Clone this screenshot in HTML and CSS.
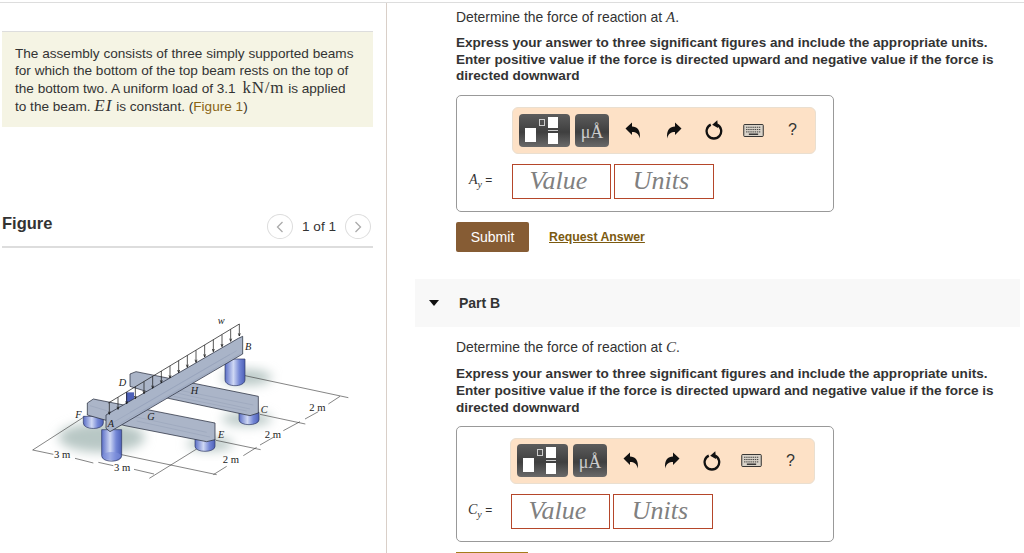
FILE: index.html
```html
<!DOCTYPE html>
<html lang="en">
<head>
    <meta charset="UTF-8">
    <meta name="viewport" content="width=device-width, initial-scale=1.0">
    <title>Reaction forces</title>
    <link rel="stylesheet" href="styles.css">
</head>
<body>
    <svg class="defs" width="0" height="0">
        <symbol id="i-undo" viewBox="0 0 16 17">
            <path d="M.5 6.500 7 .5v4c5 0 8.800 3.500 7.800 12-1-4.800-3.800-6.500-7.800-6.500v3z"/>
        </symbol>
        <symbol id="i-redo" viewBox="0 0 16 17">
            <path d="M15.500 6.500 9 .5v4c-5 0-8.800 3.500-7.800 12 1-4.800 3.800-6.500 7.800-6.500v3z"/>
        </symbol>
        <symbol id="i-reset" viewBox="0 0 18 20">
            <path d="M5.800 4.600A7.300 7.300 0 1 0 12 4.600" fill="none" stroke="#111" stroke-width="2.300"/>
            <path d="M12.300 .3 7.200 4.800l5.800 3.200z"/>
        </symbol>
        <symbol id="i-keys" viewBox="0 0 22 14">
            <rect x=".5" y=".5" width="21" height="13" rx="1" fill="#d8d2c8" stroke="#222"/>
            <path d="M3 3.500h16M3 6h16M3 8.500h16" stroke="#333" stroke-dasharray="1.500 .8"/>
            <path d="M6 11h10" stroke="#222" stroke-width="1.400"/>
        </symbol>
        <linearGradient id="g-cyl" x1="0" x2="1" y1="0" y2="0">
            <stop offset="0" stop-color="#5a6ec6"/>
            <stop offset=".42" stop-color="#cfd8f4"/>
            <stop offset=".72" stop-color="#7487d6"/>
            <stop offset="1" stop-color="#4e61b8"/>
        </linearGradient>
        <filter id="f-blur"><feGaussianBlur stdDeviation="16"/></filter>
        <filter id="f-soft"><feGaussianBlur stdDeviation=".7"/></filter>
    </svg>

    <div class="page">
        <div class="left">
            <div class="intro">
                The assembly consists of three simply supported beams<br>
                for which the bottom of the top beam rests on the top of<br>
                the bottom two. A uniform load of 3.1 <span class="unit">kN/m</span> is applied<br>
                to the beam. <span class="math">EI</span> is constant. (<a class="fig-link">Figure 1</a>)
            </div>

            <div class="figure-head">
                <h2>Figure</h2>
                <div class="pager">
                    <span class="pager-btn">
                        <svg width="8" height="12" viewBox="0 0 8 12"><path d="M6.500 1 1.500 6l5 5" fill="none" stroke="#aaa" stroke-width="1.300"/></svg>
                    </span>
                    <span class="pager-text">1 of 1</span>
                    <span class="pager-btn">
                        <svg width="8" height="12" viewBox="0 0 8 12"><path d="M1.500 1l5 5-5 5" fill="none" stroke="#aaa" stroke-width="1.300"/></svg>
                    </span>
                </div>
            </div>

            <svg class="diagram" width="320" height="190" viewBox="0 0 960 570">
                <g fill="#b8c7c5" filter="url(#f-blur)">
                    <ellipse cx="215" cy="385" rx="130" ry="45"/>
                    <ellipse cx="540" cy="405" rx="70" ry="20"/>
                    <ellipse cx="650" cy="330" rx="75" ry="20"/>
                    <ellipse cx="650" cy="205" rx="75" ry="24"/>
                </g>

                <g fill="none" stroke="#333" stroke-width="1.800">
                    <path d="M8 423 165 322M8 423 70 436M135 448 190 462M205 460 250 470M312 481 372 495"/>
                    <path d="M270 436 560 497M358 508 500 420M550 497 590 472M640 440 680 415M690 408 730 385M760 365 810 338M825 330 865 308M895 285 930 262"/>
                    <path d="M558 394 692 422M690 316 826 345M645 200 955 266"/>
                </g>

                <g filter="url(#f-soft)">
                    <path d="M585 150v62c0 24 60 24 60 0v-62z" fill="url(#g-cyl)" stroke="#2c3560" stroke-width="2"/>

                    <path d="M627 310v22c0 20 60 20 60 0v-22z" fill="url(#g-cyl)" stroke="#2c3560" stroke-width="2"/>
                    <path d="M300 195 318 188 685 262V312L660 320 415 268 300 232z" fill="#abb5c8" stroke="#262c3c" stroke-width="2.200"/>
                    <path d="M420 238 670 288M440 252 660 300M430 262 650 306" stroke="#8a96ae" fill="none"/>
                    <path d="M288 250h24v45h-24z" fill="#4e61b8"/>

                    <path d="M160 322v20c0 22 60 22 60 0v-20z" fill="url(#g-cyl)" stroke="#2c3560" stroke-width="2"/>
                    <path d="M495 390v22c0 20 60 20 60 0v-22z" fill="url(#g-cyl)" stroke="#2c3560" stroke-width="2"/>
                    <path d="M172 282 190 270 555 342V392L530 398 285 350 172 318z" fill="#abb5c8" stroke="#262c3c" stroke-width="2.200"/>
                    <path d="M300 320 530 370M320 336 540 384M180 290 230 305" stroke="#8a96ae" fill="none"/>

                    <path d="M215 362v78c0 22 60 22 60 0v-78z" fill="url(#g-cyl)" stroke="#2c3560" stroke-width="2"/>
                    <ellipse cx="245" cy="441" rx="28" ry="12" fill="#7d90dc" opacity=".6"/>

                    <path d="M228 318 625 88 638 82V135L240 368 228 358z" fill="#a9b4c8" stroke="#262c3c" stroke-width="2.200"/>
                    <path d="M250 340 620 125M270 344 630 134M300 310 600 136M330 312 560 178" stroke="#8d99b2" fill="none"/>
                </g>

                <g fill="none" stroke="#1a1a1a" stroke-width="2.200">
                    <path d="M235 282 628 45"/>
                    <path d="M238 280v36M264 265v36M290 249v36M316 233v36M342 218v36M368 202v36M394 186v36M420 171v36M446 155v36M472 139v36M498 124v36M524 108v36M550 92v36M576 77v36M602 61v36M628 45v36"/>
                    <path d="M235 308l3 8 3-8M261 293l3 8 3-8M287 277l3 8 3-8M313 261l3 8 3-8M339 246l3 8 3-8M365 230l3 8 3-8M391 214l3 8 3-8M417 199l3 8 3-8M443 183l3 8 3-8M469 167l3 8 3-8M495 152l3 8 3-8M521 136l3 8 3-8M547 120l3 8 3-8M573 105l3 8 3-8M599 89l3 8 3-8M625 73l3 8 3-8"/>
                </g>

                <g class="fig-labels">
                    <text x="563" y="44">w</text>
                    <text x="645" y="122">B</text>
                    <text x="266" y="232">D</text>
                    <text x="482" y="256">H</text>
                    <text x="136" y="327">F</text>
                    <text x="233" y="354">A</text>
                    <text x="352" y="332">G</text>
                    <text x="692" y="312">C</text>
                    <text x="564" y="388">E</text>
                </g>
                <g class="fig-dims">
                    <text x="72" y="448">3 m</text>
                    <text x="252" y="485">3 m</text>
                    <text x="578" y="463">2 m</text>
                    <text x="704" y="387">2 m</text>
                    <text x="838" y="305">2 m</text>
                </g>
            </svg>
        </div>

        <div class="right">
            <section class="part part-a">
                <p class="lead">Determine the force of reaction at <span class="math">A</span>.</p>
                <p class="instr">Express your answer to three significant figures and include the appropriate units.<br>
                    Enter positive value if the force is directed upward and negative value if the force is<br>
                    directed downward</p>

                <div class="answer">
                    <div class="toolbar">
                        <span class="tool-btn tool-wide">
                            <span class="sq sq-big"></span>
                            <span class="sq sq-small"></span>
                            <span class="frac"><i></i><b></b><i></i></span>
                        </span>
                        <span class="tool-btn tool-unit">μÅ</span>
                        <svg class="tool-ico ico-undo"><use href="#i-undo"/></svg>
                        <svg class="tool-ico ico-redo"><use href="#i-redo"/></svg>
                        <svg class="tool-ico ico-reset"><use href="#i-reset"/></svg>
                        <svg class="tool-ico ico-keys"><use href="#i-keys"/></svg>
                        <span class="tool-help">?</span>
                    </div>
                    <div class="entry">
                        <span class="var"><span class="math">A<sub>y</sub></span> =</span>
                        <span class="field">Value</span>
                        <span class="field">Units</span>
                    </div>
                </div>

                <div class="actions">
                    <span class="submit">Submit</span>
                    <a class="request">Request Answer</a>
                </div>
            </section>

            <div class="part-head">
                <span class="caret"></span>
                <span class="part-title">Part B</span>
            </div>

            <section class="part part-b">
                <p class="lead">Determine the force of reaction at <span class="math">C</span>.</p>
                <p class="instr">Express your answer to three significant figures and include the appropriate units.<br>
                    Enter positive value if the force is directed upward and negative value if the force is<br>
                    directed downward</p>

                <div class="answer">
                    <div class="toolbar">
                        <span class="tool-btn tool-wide">
                            <span class="sq sq-big"></span>
                            <span class="sq sq-small"></span>
                            <span class="frac"><i></i><b></b><i></i></span>
                        </span>
                        <span class="tool-btn tool-unit">μÅ</span>
                        <svg class="tool-ico ico-undo"><use href="#i-undo"/></svg>
                        <svg class="tool-ico ico-redo"><use href="#i-redo"/></svg>
                        <svg class="tool-ico ico-reset"><use href="#i-reset"/></svg>
                        <svg class="tool-ico ico-keys"><use href="#i-keys"/></svg>
                        <span class="tool-help">?</span>
                    </div>
                    <div class="entry">
                        <span class="var"><span class="math">C<sub>y</sub></span> =</span>
                        <span class="field">Value</span>
                        <span class="field">Units</span>
                    </div>
                </div>

                <div class="next-submit"></div>
            </section>
        </div>
    </div>
</body>
</html>
```

FILE: styles.css
```css
* {
    box-sizing: border-box;
}
html, body {
    margin: 0;
    height: 553px;
    overflow: hidden;
    background: white;
}
body {
    font-family: "Liberation Sans", Arial, sans-serif;
    font-size: 14px;
    color: #333;
}
.defs {
    display: block;
    height: 0;
}
.page {
    display: flex;
    height: 551px;
    margin-top: 2px;
    border-top: 1px solid #ddd;
}
.math {
    font-family: "Liberation Serif", serif;
    font-style: italic;
    line-height: 1;
}
.math sub {
    font-size: 10px;
    line-height: 0;
}

/* left column */
.left {
    width: 387px;
    flex: none;
    padding: 28px 13px 0 2px;
    border-right: 1px solid #d9cfc8;
}
.intro {
    height: 96px;
    padding: 13px 0 0 13px;
    background: #f5f4e4;
    border-top: 1px solid #ddd;
    line-height: 17px;
    font-size: 13.600px;
    white-space: nowrap;
}
.unit {
    font-family: "Liberation Serif", serif;
    font-size: 17px;
    letter-spacing: .8px;
    line-height: 1;
    margin-left: 3px;
}
.intro .math {
    font-size: 17px;
    letter-spacing: 1px;
}
.fig-link {
    color: #8a6414;
}
.figure-head {
    display: flex;
    justify-content: space-between;
    align-items: center;
    height: 41px;
    margin-top: 80px;
    padding-right: 2px;
    border-bottom: 2px solid #ddd;
}
.figure-head h2 {
    margin: 0 0 7px;
    font-size: 16.500px;
    color: #333;
}
.pager {
    display: flex;
    align-items: center;
    gap: 9px;
    font-size: 13.600px;
}
.pager-btn {
    display: flex;
    align-items: center;
    justify-content: center;
    width: 26px;
    height: 25px;
    border: 1px solid #ddd;
    border-radius: 50%;
}
.diagram {
    display: block;
    margin: 61px 0 0 28px;
}
.fig-labels text {
    font-family: "Liberation Serif", serif;
    font-style: italic;
    font-size: 31px;
    fill: #222;
}
.fig-dims text {
    font-family: "Liberation Serif", serif;
    font-size: 32px;
    fill: #222;
}

/* right column */
.right {
    flex: 1;
    padding-left: 28px;
    min-width: 0;
}
.part {
    padding-left: 41px;
    padding-right: 26px;
}
.lead {
    margin: 0;
    padding-top: 6px;
    font-size: 13.900px;
    line-height: 17px;
}
.lead .math {
    font-size: 15px;
}
.instr {
    margin: 9px 0 0;
    font-size: 13.550px;
    font-weight: bold;
    line-height: 16.500px;
    white-space: nowrap;
}
.answer {
    width: 378px;
    height: 117px;
    margin-top: 10px;
    padding: 11px 17px 0 55px;
    border: 1px solid #999;
    border-radius: 5px;
}
.toolbar {
    display: flex;
    align-items: center;
    height: 47px;
    padding-left: 6px;
    background: #fde1c6;
    border: 1px solid #eadfd0;
    border-radius: 6px;
}
.tool-btn {
    display: block;
    position: relative;
    height: 33px;
    border-radius: 4px;
    background: linear-gradient(#5c5c5c, #3f3f3f 55%, #6a6a6a);
    color: #ccc;
}
.tool-wide {
    width: 51px;
}
.tool-unit {
    width: 34px;
    margin-left: 5px;
    font-family: "Liberation Serif", serif;
    font-size: 18px;
    line-height: 36px;
    text-align: center;
}
.sq {
    position: absolute;
    background: white;
}
.sq-big {
    left: 6px;
    top: 14px;
    width: 11px;
    height: 14px;
}
.sq-small {
    left: 20px;
    top: 5px;
    width: 6px;
    height: 7px;
    background: none;
    border: 1px solid #ccc;
}
.frac {
    position: absolute;
    left: 29px;
    top: 3px;
    width: 10px;
}
.frac i, .frac b {
    display: block;
    background: white;
}
.frac i {
    height: 11px;
}
.frac b {
    height: 1px;
    margin: 2px 0;
    background: #ccc;
}
.tool-ico {
    flex: none;
    fill: #111;
}
.ico-undo {
    width: 16px;
    height: 17px;
    margin-left: 16px;
}
.ico-redo {
    width: 16px;
    height: 17px;
    margin-left: 25px;
}
.ico-reset {
    width: 18px;
    height: 20px;
    margin-left: 23px;
}
.ico-keys {
    width: 21px;
    height: 13px;
    margin-left: 20px;
}
.tool-help {
    margin-left: 24px;
    font-size: 16px;
    color: #333;
}
.entry {
    display: flex;
    position: relative;
    gap: 3px;
    margin-top: 10px;
}
.var {
    position: absolute;
    left: -43px;
    top: 9px;
    font-size: 12px;
}
.var .math {
    font-size: 14px;
}
.field {
    width: 99px;
    height: 35px;
    padding-right: 6px;
    border: 1px solid #b5462a;
    font-family: "Liberation Serif", serif;
    font-style: italic;
    font-size: 26px;
    line-height: 32px;
    color: #808080;
    text-align: center;
}
.field + .field {
    width: 100px;
}
.actions {
    display: flex;
    align-items: center;
    gap: 20px;
    margin-top: 10px;
}
.submit {
    width: 73px;
    height: 30px;
    background: #865c34;
    border-radius: 2px;
    color: white;
    text-align: center;
    line-height: 30px;
}
.request {
    color: #7b5a10;
    font-size: 12.300px;
    font-weight: bold;
    text-decoration: underline;
}
.part-head {
    display: flex;
    align-items: center;
    height: 48px;
    margin-top: 27px;
    margin-right: 4px;
    padding-left: 14px;
    background: #f8f8f8;
}
.caret {
    width: 0;
    height: 0;
    border: 5.500px solid transparent;
    border-top: 6px solid #111;
    border-bottom: 0;
}
.part-title {
    margin-left: 20px;
    font-weight: bold;
}
.part-b .lead {
    padding-top: 12px;
}
.part-b .instr {
    margin-top: 9px;
    line-height: 17px;
}
.part-b .answer {
    height: 116px;
    margin-top: 10px;
}
.part-b .toolbar {
    height: 46px;
    margin-left: -2px;
    margin-right: 1px;
}
.part-b .entry {
    margin-left: -1px;
}
.next-submit {
    width: 72px;
    margin-top: 10px;
    border-top: 2px solid #a57c1b;
}
```
